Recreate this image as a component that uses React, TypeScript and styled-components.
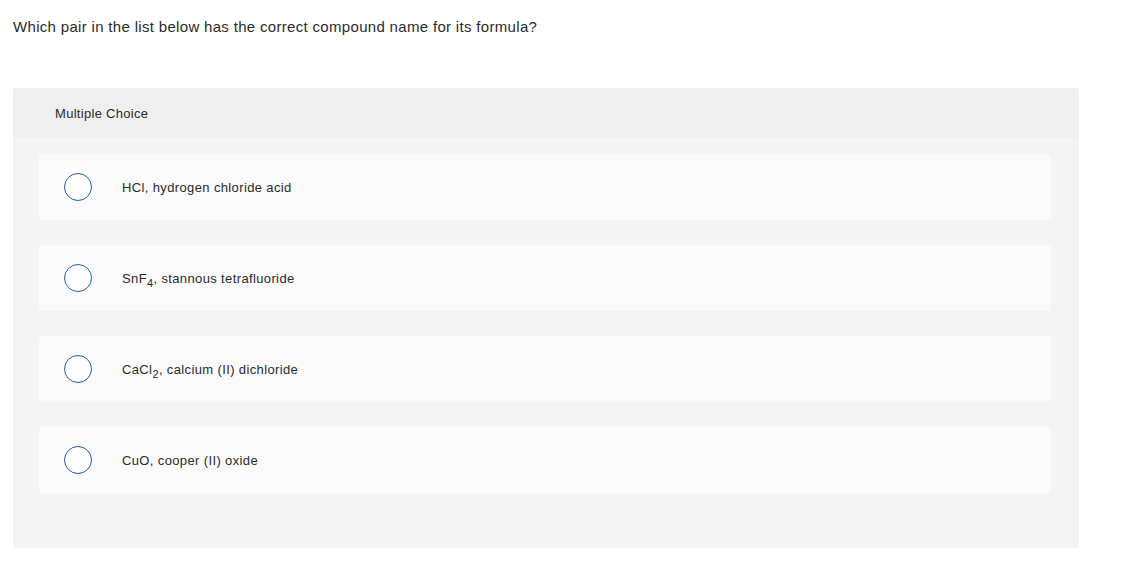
import { createGlobalStyle } from "styled-components";
import styled from "styled-components";

const GlobalStyle = createGlobalStyle`
   html, body {
      margin: 0;
      padding: 0;
      background: #ffffff;
   }
   body {
      font-family: "Liberation Sans", Arial, sans-serif;
      color: #333333;
   }
`;

const Page = styled.div`
   padding: 16px 44px 0 13px;
`;

const Question = styled.p`
   margin: 0;
   font-size: 15px;
   line-height: 21px;
   letter-spacing: 0.32px;
   color: #2b2b2b;
`;

const Panel = styled.section`
   margin-top: 51px;
   width: 1066px;
   background: #f4f4f4;
   border-radius: 3px;
   overflow: hidden;
`;

const PanelHeader = styled.div`
   height: 49px;
   display: flex;
   align-items: center;
   padding: 1px 0 0 42px;
   box-sizing: border-box;
   background: #efefef;
   font-size: 13px;
   letter-spacing: 0.3px;
   color: #2b2b2b;
`;

const Options = styled.ul`
   list-style: none;
   margin: 0;
   padding: 17px 28px 55px 26px;
   display: flex;
   flex-direction: column;
   gap: 25.5px;
`;

const Option = styled.li`
   height: 65.5px;
   display: flex;
   align-items: center;
   gap: 30px;
   padding-left: 25px;
   background: #fafafa;
   border-radius: 3px;
   font-size: 13px;
   letter-spacing: 0.37px;
   color: #2b2b2b;
   cursor: pointer;
`;

const Radio = styled.span`
   width: 28px;
   height: 28px;
   box-sizing: border-box;
   border: 1.5px solid #1d5fa0;
   border-radius: 50%;
   background: #ffffff;
   flex-shrink: 0;
`;

const Label = styled.span`
   padding-top: 2px;
`;

const Sub = styled.sub`
   font-size: 11px;
   vertical-align: -4px;
   line-height: 0;
`;

const choices = [
   <>HCl, hydrogen chloride acid</>,
   <>
      SnF<Sub>4</Sub>, stannous tetrafluoride
   </>,
   <>
      CaCl<Sub>2</Sub>, calcium (II) dichloride
   </>,
   <>CuO, cooper (II) oxide</>,
];

export default function App() {
   return (
      <>
         <GlobalStyle />
         <Page>
            <Question>
               Which pair in the list below has the correct compound name for its formula?
            </Question>
            <Panel>
               <PanelHeader>Multiple Choice</PanelHeader>
               <Options>
                  {choices.map((c, i) => (
                     <Option key={i}>
                        <Radio />
                        <Label>{c}</Label>
                     </Option>
                  ))}
               </Options>
            </Panel>
         </Page>
      </>
   );
}
